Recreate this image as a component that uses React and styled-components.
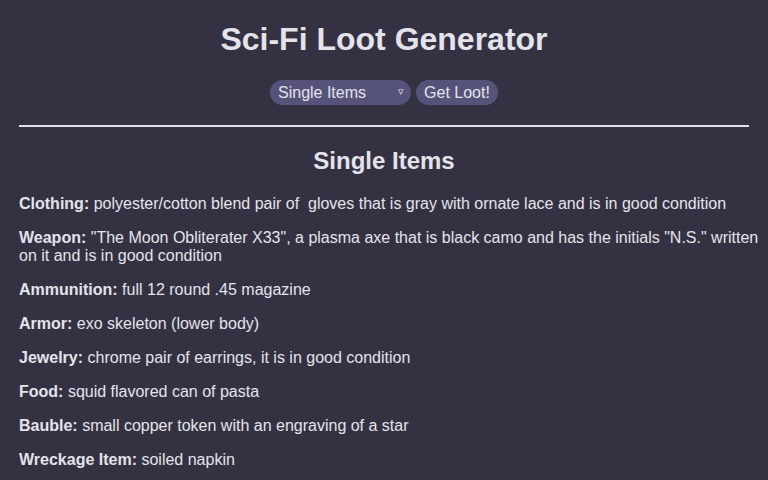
import React, { useState } from 'react';
import styled, { createGlobalStyle } from 'styled-components';

const GlobalStyle = createGlobalStyle`
  body {
    margin: 0;
    background: #343242;
    color: #e4e3ea;
    font-family: "Liberation Sans", Arial, sans-serif;
  }
`;

const items = [
  ['Clothing', 'polyester/cotton blend pair of \u00a0gloves that is gray with ornate lace and is in good condition'],
  ['Weapon', '"The Moon Obliterater X33", a plasma axe that is black camo and has the initials "N.S." written on it and is in good condition'],
  ['Ammunition', 'full 12 round .45 magazine'],
  ['Armor', 'exo skeleton (lower body)'],
  ['Jewelry', 'chrome pair of earrings, it is in good condition'],
  ['Food', 'squid flavored can of pasta'],
  ['Bauble', 'small copper token with an engraving of a star'],
  ['Wreckage Item', 'soiled napkin'],
];

function App() {
  const [mode, setMode] = useState('single');

  return (
    <Page>
      <GlobalStyle />
      <Title>Sci-Fi Loot Generator</Title>
      <Controls>
        <SelectWrap>
          <Select value={mode} onChange={(e) => setMode(e.target.value)}>
            <option value="single">Single Items</option>
            <option value="cache">Loot Cache</option>
          </Select>
        </SelectWrap>
        <LootButton>Get Loot!</LootButton>
      </Controls>
      <Divider />
      <SectionTitle>Single Items</SectionTitle>
      {items.map(([label, text]) => (
        <Item key={label}>
          <b>{label}:</b> {text}
        </Item>
      ))}
    </Page>
  );
}

const Page = styled.div`
  padding: 0 6px 0 19px;
`;

const Title = styled.h1`
  font-size: 32px;
  text-align: center;
  margin: 21px 0 22px;
  padding-right: 13px;
`;

const Controls = styled.div`
  display: flex;
  justify-content: center;
  gap: 5px;
  padding-right: 13px;
`;

const SelectWrap = styled.div`
  position: relative;

  &::after {
    content: '▿';
    position: absolute;
    right: 7px;
    top: 5px;
    font-size: 11px;
    color: #e4e3ea;
    pointer-events: none;
  }
`;

const Select = styled.select`
  appearance: none;
  width: 141px;
  height: 25px;
  border: none;
  border-radius: 13px;
  background: #56537a;
  color: #e4e3ea;
  font-family: inherit;
  font-size: 16px;
  padding: 0 8px;
  outline: none;
`;

const LootButton = styled.button`
  height: 25px;
  width: 82px;
  border: none;
  border-radius: 13px;
  background: #56537a;
  color: #e4e3ea;
  font-family: inherit;
  font-size: 16px;
  padding: 0 8px;
  cursor: pointer;
`;

const Divider = styled.hr`
  border: none;
  height: 2px;
  background: #e4e3ea;
  margin: 20px 13px 0 0;
`;

const SectionTitle = styled.h2`
  font-size: 24px;
  text-align: center;
  margin: 20px 13px 20px 0;
`;

const Item = styled.p`
  font-size: 16px;
  line-height: 18px;
  margin: 16px 0;
`;

export default App;
